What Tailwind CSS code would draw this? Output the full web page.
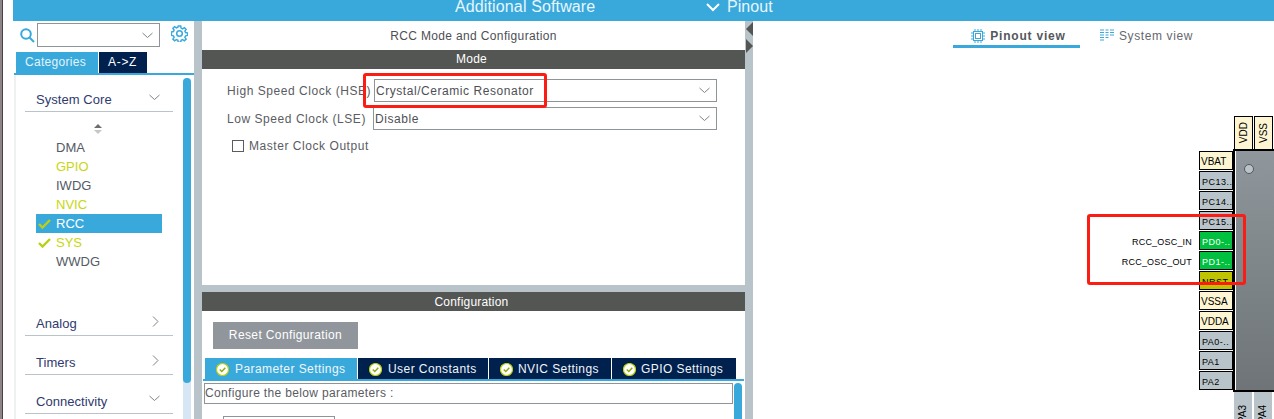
<!DOCTYPE html>
<html lang="en">
<head>
<meta charset="UTF-8">
<title>RCC Mode and Configuration</title>
<script src="https://cdn.jsdelivr.net/npm/@tailwindcss/browser@4"></script>
</head>
<body class="w-[1274px] h-[419px] overflow-hidden bg-white font-['Liberation_Sans',sans-serif] relative">
  <div class="flex h-full">
    <!-- window edge -->
    <div class="w-[13px] h-full flex shrink-0">
      <div class="w-[2px] bg-[#8d8488]"></div>
      <div class="w-px bg-[#4a4248]"></div>
      <div class="flex-1 bg-white"></div>
    </div>
    <div class="flex-1 flex flex-col min-w-0">
      <!-- top bar -->
      <div class="h-[21px] bg-[#39a9dc] shrink-0 relative overflow-hidden">
        <span class="absolute left-[442px] top-0 text-[16px] leading-[14px] tracking-[0.13px] text-[#e8f6fc]">Additional Software</span>
        <svg class="absolute left-[693px] top-[3px]" width="14" height="9" viewBox="0 0 14 9" fill="none" stroke="#fff" stroke-width="2"><path d="M1 1l6 6 6-6"/></svg>
        <span class="absolute left-[714px] top-0 text-[16px] leading-[14px] tracking-[0.05px] text-[#e8f6fc]">Pinout</span>
      </div>
      <div class="flex-1 flex min-h-0">
        <!-- left panel -->
        <div class="w-[181px] shrink-0 flex flex-col">
          <div class="h-[31px] shrink-0 flex items-start pt-[2px] relative">
            <svg class="ml-[7px] mt-[5px]" width="15" height="15" viewBox="0 0 15 15" fill="none" stroke="#39a9dc" stroke-width="2"><circle cx="6" cy="6" r="4.8"/><path d="M9.5 9.5l4.500 4.500"/></svg>
            <div class="ml-[2px] w-[123px] h-[24px] border border-[#8f9499] flex items-center justify-end pr-[6px]">
              <svg width="11" height="7" viewBox="0 0 11 7" fill="none" stroke="#7d8287" stroke-width="1"><path d="M.5 1l5 4.5 5-4.5"/></svg>
            </div>
            <svg class="ml-[11px] mt-[2px]" width="17" height="17" viewBox="0 0 17 17" fill="none" stroke="#39a9dc" stroke-width="1.5"><circle cx="8.5" cy="8.5" r="2.8"/><path d="M7.3 1h2.400l.4 2.100 1.500.7 1.800-1.200 1.700 1.700-1.200 1.800.7 1.500 2 .4v2.400l-2 .4-.7 1.500 1.200 1.800-1.700 1.700-1.800-1.200-1.500.7-.4 2H7.300l-.4-2-1.500-.7-1.800 1.200-1.700-1.700 1.200-1.800-.7-1.500-2-.4V7l2-.4.7-1.500-1.200-1.800 1.700-1.700 1.800 1.200 1.500-.7z"/></svg>
          </div>
          <div class="flex h-[21px] shrink-0 ml-[3px] text-[12px] text-[#e3f3fb]">
            <div class="w-[82px] bg-[#39a9dc] pl-[9px] leading-[21px] tracking-[0.3px]">Categories</div>
            <div class="w-[48px] ml-px bg-[#00204e] pl-[9px] leading-[21px] tracking-[0.7px] text-white">A-&gt;Z</div>
          </div>
          <div class="h-[2px] bg-[#39a9dc] ml-px shrink-0"></div>
          <div class="flex-1 flex min-h-0 border-l-2 border-[#eef0f1] ml-[1px]">
            <div class="flex-1 pl-[9px] pr-[10px] relative">
              <div class="pt-[17px] h-[37px] border-b border-[#b9c4ca] flex justify-between text-[13px] tracking-[0.05px] text-[#2f3a6e] leading-[16px]">
                <span class="pl-[11px]">System Core</span>
                <svg class="mt-[2px] mr-[13px]" width="11" height="7" viewBox="0 0 11 7" fill="none" stroke="#7d8287"><path d="M.5 1l5 4.5 5-4.5"/></svg>
              </div>
              <div class="pl-[21px] h-[23px] pt-[12px] flex flex-col gap-[2px] ml-[48px]">
                <div class="w-0 h-0 border-x-[4px] border-x-transparent border-b-[4px] border-b-[#6b6f72]"></div>
                <div class="w-0 h-0 border-x-[4px] border-x-transparent border-t-[4px] border-t-[#c4c7c9]"></div>
              </div>
              <div class="mt-[2px] ml-[11px] w-[126px] text-[13px] leading-[19px] h-[161px] pt-[1px]">
                <div class="pl-[20px] text-[#555a66]">DMA</div>
                <div class="pl-[20px] text-[#c9d60f]">GPIO</div>
                <div class="pl-[20px] text-[#555a66]">IWDG</div>
                <div class="pl-[20px] text-[#c9d60f]">NVIC</div>
                <div class="relative pl-[20px] bg-[#39a9dc] text-white">
                  <svg class="absolute left-[2px] top-[5px]" width="13" height="10" viewBox="0 0 13 10" fill="none" stroke="#bccf12" stroke-width="2.4"><path d="M1 5l3.500 3.500L12 1"/></svg>RCC
                </div>
                <div class="relative pl-[20px] text-[#c9d60f]">
                  <svg class="absolute left-[2px] top-[5px]" width="13" height="10" viewBox="0 0 13 10" fill="none" stroke="#bccf12" stroke-width="2.4"><path d="M1 5l3.500 3.500L12 1"/></svg>SYS
                </div>
                <div class="pl-[20px] text-[#555a66]">WWDG</div>
              </div>
              <div class="mt-[-1px] h-[39px] pt-[19px] border-b border-[#b9c4ca] flex justify-between text-[13px] tracking-[0.05px] text-[#2f3a6e] leading-[16px]">
                <span class="pl-[11px]">Analog</span>
                <svg class="mr-[14px]" width="7" height="11" viewBox="0 0 7 11" fill="none" stroke="#7d8287"><path d="M1 .5l5 5-5 5"/></svg>
              </div>
              <div class="h-[39px] pt-[19px] border-b border-[#b9c4ca] flex justify-between text-[13px] tracking-[0.05px] text-[#2f3a6e] leading-[16px]">
                <span class="pl-[11px]">Timers</span>
                <svg class="mr-[14px]" width="7" height="11" viewBox="0 0 7 11" fill="none" stroke="#7d8287"><path d="M1 .5l5 5-5 5"/></svg>
              </div>
              <div class="h-[39px] pt-[19px] border-b border-[#b9c4ca] flex justify-between text-[13px] tracking-[0.05px] text-[#2f3a6e] leading-[16px]">
                <span class="pl-[11px]">Connectivity</span>
                <svg class="mt-[1px] mr-[13px]" width="11" height="7" viewBox="0 0 11 7" fill="none" stroke="#7d8287"><path d="M.5 1l5 4.5 5-4.5"/></svg>
              </div>
            </div>
            <div class="w-[8px] mr-[3px] mt-[3px] bg-[#d6e6f4] rounded-t-[4px] shrink-0">
              <div class="h-[305px] bg-[#39a9dc] rounded-[4px]"></div>
            </div>
          </div>
        </div>
        <div class="w-[8px] bg-[#b9c4ca] shrink-0"></div>
        <!-- centre panel -->
        <div class="w-[543px] shrink-0 flex flex-col bg-[#b9c4ca]">
          <div class="h-[264px] bg-white shrink-0">
            <div class="h-[29px] flex items-center justify-center text-[12px] tracking-[0.35px] text-[#4e4f55]">RCC Mode and Configuration</div>
            <div class="h-[19px] bg-[#545654] text-center text-[12px] leading-[19px] text-white tracking-[0.2px] pr-[4px]">Mode</div>
            <div class="pt-[10px] pl-[25px] text-[12px] tracking-[0.55px] text-[#5a5c63]">
              <div class="flex items-center h-[23px]">
                <span class="w-[147px]">High Speed Clock (HSE)</span>
                <div class="w-[343px] h-[23px] border border-[#8f9499] flex items-center justify-between pl-[1px] pr-[6px] text-[#4e4f55]">Crystal/Ceramic Resonator
                  <svg width="11" height="7" viewBox="0 0 11 7" fill="none" stroke="#7d8287"><path d="M.5 1l5 4.5 5-4.5"/></svg>
                </div>
              </div>
              <div class="flex items-center h-[23px] mt-[5px]">
                <span class="w-[146px]">Low Speed Clock (LSE)</span>
                <div class="w-[344px] h-[23px] border border-[#8f9499] flex items-center justify-between pl-[1px] pr-[6px] text-[#4e4f55]">Disable
                  <svg width="11" height="7" viewBox="0 0 11 7" fill="none" stroke="#7d8287"><path d="M.5 1l5 4.5 5-4.5"/></svg>
                </div>
              </div>
              <div class="flex items-center mt-[5px] ml-[5px] gap-[5px] h-[22px]">
                <div class="w-[12px] h-[12px] border border-[#5a5c63]"></div>
                <span>Master Clock Output</span>
              </div>
            </div>
          </div>
          <div class="h-[7px] shrink-0"></div>
          <div class="flex-1 bg-white flex flex-col min-h-0">
            <div class="h-[19px] bg-[#545654] text-center text-[12px] leading-[20px] text-white tracking-[0.2px] pr-[4px] shrink-0">Configuration</div>
            <div class="h-[27px] w-[145px] mt-[11px] ml-[11px] bg-[#90969c] text-[12px] leading-[27px] text-center tracking-[0.38px] text-white shrink-0">Reset Configuration</div>
            <div class="flex mt-[9px] ml-[3px] h-[21px] text-[12px] tracking-[0.43px] text-[#f0f6fa] leading-[21px] shrink-0">
              <div class="w-[152px] bg-[#39a9dc] flex items-center pl-[11px] pt-px gap-[6px]">
                <svg width="13" height="13" viewBox="0 0 13 13"><circle cx="6.500" cy="6.500" r="6" fill="#fff" stroke="#bccf12" stroke-width="1.2"/><path d="M3.800 6.500l2 2 3.500-3.800" fill="none" stroke="#8ea80e" stroke-width="1.4"/></svg>Parameter Settings
              </div>
              <div class="w-[130px] ml-px bg-[#00204e] flex items-center pl-[11px] pt-px gap-[6px]">
                <svg width="13" height="13" viewBox="0 0 13 13"><circle cx="6.500" cy="6.500" r="6" fill="#fff" stroke="#bccf12" stroke-width="1.2"/><path d="M3.800 6.500l2 2 3.500-3.800" fill="none" stroke="#8ea80e" stroke-width="1.4"/></svg>User Constants
              </div>
              <div class="w-[122px] ml-px bg-[#00204e] flex items-center pl-[11px] pt-px gap-[5px]">
                <svg width="13" height="13" viewBox="0 0 13 13"><circle cx="6.500" cy="6.500" r="6" fill="#fff" stroke="#bccf12" stroke-width="1.2"/><path d="M3.800 6.500l2 2 3.500-3.800" fill="none" stroke="#8ea80e" stroke-width="1.4"/></svg>NVIC Settings
              </div>
              <div class="w-[124px] ml-px bg-[#00204e] flex items-center pl-[11px] pt-px gap-[5px]">
                <svg width="13" height="13" viewBox="0 0 13 13"><circle cx="6.500" cy="6.500" r="6" fill="#fff" stroke="#bccf12" stroke-width="1.2"/><path d="M3.800 6.500l2 2 3.500-3.800" fill="none" stroke="#8ea80e" stroke-width="1.4"/></svg>GPIO Settings
              </div>
            </div>
            <div class="h-[2px] bg-[#39a9dc] ml-px mr-[1px] shrink-0"></div>
            <div class="flex-1 flex pl-[2px] pt-[2px] min-h-0">
              <div class="flex-1 min-w-0">
                <div class="h-[21px] border border-[#8f9499] text-[12px] leading-[19px] tracking-[0.35px] text-[#5a5c63] w-[529px]">Configure the below parameters :</div>
                <div class="mt-[12px] ml-[19px] w-[112px] h-[10px] border border-[#8f9499]"></div>
              </div>
              <div class="w-[8px] mr-[3px] bg-[#39a9dc] rounded-t-[4px] shrink-0"></div>
            </div>
          </div>
        </div>
        <!-- splitter -->
        <div class="w-[8px] bg-[#b9c4ca] shrink-0 flex flex-col items-start gap-[3px] pt-[1px] pl-px">
          <div class="w-0 h-0 border-y-[7px] border-y-transparent border-r-[7px] border-r-[#545654]"></div>
          <div class="w-0 h-0 border-y-[7px] border-y-transparent border-l-[7px] border-l-[#545654]"></div>
        </div>
        <!-- pinout canvas -->
        <div class="flex-1 bg-white relative overflow-hidden">
          <div class="absolute left-[200px] top-[9px] w-[127px] h-[18px] border-b-[3px] border-[#39a9dc] flex items-center justify-center gap-[5px] text-[12px] font-bold tracking-[0.8px] text-[#55575c] pb-[3px] pl-[4px]">
            <svg width="14" height="14" viewBox="0 0 14 14" fill="none" stroke="#39a9dc"><rect x="2.500" y="2.500" width="9" height="9"/><rect x="4.500" y="4.500" width="5" height="5"/><path d="M4 0v2M7 0v2M10 0v2M4 12v2M7 12v2M10 12v2M0 4h2M0 7h2M0 10h2M12 4h2M12 7h2M12 10h2"/></svg>
            Pinout view
          </div>
          <div class="absolute left-[347px] top-[7px] h-[15px] flex items-center gap-[5px] text-[12px] tracking-[0.6px] text-[#66686d]">
            <svg width="14" height="13" viewBox="0 0 14 13" stroke="#39a9dc"><path d="M0 1h4M0 3.500h4M0 6h4M0 8.500h4M0 11h4M5.500 1h3M5.500 3.500h3M5.500 6h3M5.500 8.500h3M10 1h4M10 3.500h4M10 6h4"/></svg>
            System view
          </div>

          <!-- top pins -->
          <div class="absolute left-[481px] top-[95px] w-[19px] h-[34px] bg-[#fef6d2] border border-black flex items-center justify-center"><span class="[writing-mode:vertical-rl] rotate-180 text-[10px] text-black">VDD</span></div>
          <div class="absolute left-[501px] top-[95px] w-[19px] h-[34px] bg-[#fef6d2] border border-black flex items-center justify-center"><span class="[writing-mode:vertical-rl] rotate-180 text-[10px] text-black">VSS</span></div>

          <!-- chip body -->
          <div class="absolute left-[480px] top-[128px] w-[60px] h-[243px] border-2 border-black border-r-0 bg-gradient-to-b from-[#8f979c] to-[#6e7477]">
            <div class="absolute left-0 top-0 bottom-0 w-px bg-white"></div>
            <div class="absolute left-[9px] top-[13px] w-[10px] h-[10px] rounded-full bg-[#b9c4ca] border border-[#55575c]"></div>
          </div>

          <!-- left pins -->
          <div class="absolute left-[446px] top-[130px] w-[34px] flex flex-col gap-px text-[9px] leading-[20px] text-black">
            <div class="h-[19px] bg-[#fef6d2] border border-black pl-px text-[10px]">VBAT</div>
            <div class="h-[19px] bg-[#b9c4ca] border border-black pl-[2px] tracking-[0.5px]">PC13..</div>
            <div class="h-[19px] bg-[#b9c4ca] border border-black pl-[2px] tracking-[0.5px]">PC14..</div>
            <div class="h-[19px] bg-[#b9c4ca] border border-black pl-[2px] tracking-[0.5px]">PC15..</div>
            <div class="h-[19px] bg-[#00c040] border border-black pl-[2px] tracking-[0.5px] text-white">PD0-..</div>
            <div class="h-[19px] bg-[#00c040] border border-black pl-[2px] tracking-[0.5px] text-white">PD1-..</div>
            <div class="h-[19px] bg-[#bfc400] border border-black pl-[2px] tracking-[0.5px]">NRST</div>
            <div class="h-[19px] bg-[#fef6d2] border border-black pl-px text-[10px]">VSSA</div>
            <div class="h-[19px] bg-[#fef6d2] border border-black pl-px text-[10px]">VDDA</div>
            <div class="h-[19px] bg-[#b9c4ca] border border-black pl-[2px] tracking-[0.5px]">PA0-..</div>
            <div class="h-[19px] bg-[#b9c4ca] border border-black pl-[2px] tracking-[0.5px]">PA1</div>
            <div class="h-[19px] bg-[#b9c4ca] border border-black pl-[2px] tracking-[0.5px]">PA2</div>
          </div>

          <!-- bottom pins -->
          <div class="absolute left-[481px] top-[371px] w-[18px] h-[27px] bg-[#b9c4ca] flex items-start justify-center pt-[13px]"><span class="[writing-mode:vertical-rl] rotate-180 text-[10px] leading-[12px] text-black">PA3</span></div>
          <div class="absolute left-[501px] top-[371px] w-[18px] h-[27px] bg-[#b9c4ca] flex items-start justify-center pt-[13px]"><span class="[writing-mode:vertical-rl] rotate-180 text-[10px] leading-[12px] text-black">PA4</span></div>

          <!-- signal labels -->
          <div class="absolute right-[82px] top-[215px] text-[9px] leading-[12px] tracking-[0.2px] text-black">RCC_OSC_IN</div>
          <div class="absolute right-[82px] top-[235px] text-[9px] leading-[12px] tracking-[0.2px] text-black">RCC_OSC_OUT</div>
        </div>
      </div>
    </div>
  </div>

  <!-- red annotation boxes -->
  <div class="absolute left-[363px] top-[73px] w-[184px] h-[35px] border-[3px] border-[#fb1d14] rounded-[3px]"></div>
  <div class="absolute left-[1087px] top-[214px] w-[159px] h-[71px] border-[3px] border-[#fb1d14] rounded-[3px]"></div>
</body>
</html>
